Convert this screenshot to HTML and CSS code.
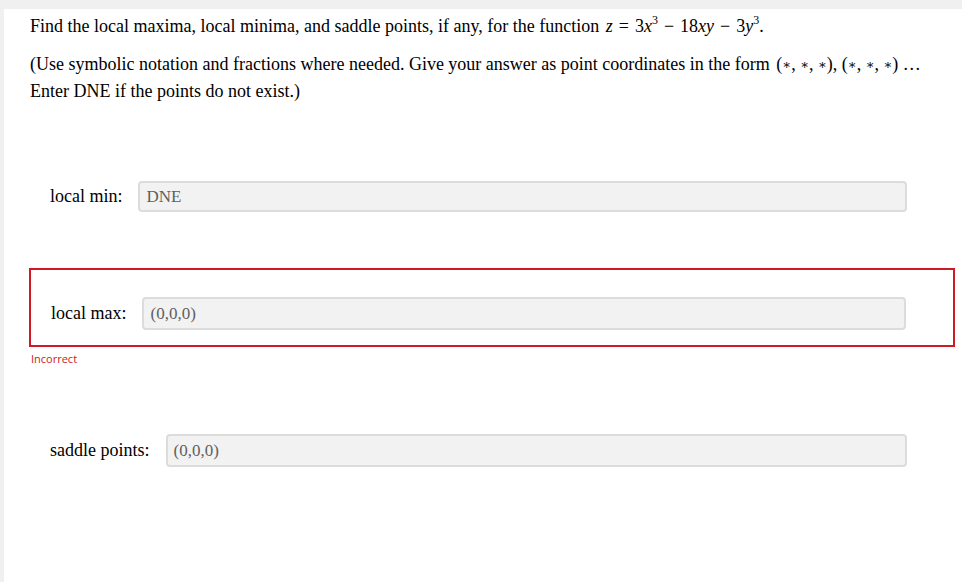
FILE: index.html
```html
<!DOCTYPE html>
<html>
<head>
<meta charset="utf-8">
<link rel="stylesheet" href="styles.css">
</head>
<body>
<div class="panel">
  <p class="question">Find the local maxima, local minima, and saddle points, if any, for the function <span class="math"><i>z</i><span class="rel">=</span>3<i>x</i><sup>3</sup><span class="op">&minus;</span>18<i>xy</i><span class="op">&minus;</span>3<i>y</i><sup>3</sup>.</span></p>
  <p class="note">(Use symbolic notation and fractions where needed. Give your answer as point coordinates in the form <span class="math">(<span class="ast">&lowast;</span>, <span class="ast">&lowast;</span>, <span class="ast">&lowast;</span>), (<span class="ast">&lowast;</span>, <span class="ast">&lowast;</span>, <span class="ast">&lowast;</span>) &hellip;</span><br>Enter DNE if the points do not exist.)</p>

  <div class="field field-min">
    <span class="label">local min:</span>
    <div class="input">DNE</div>
  </div>

  <div class="wrong">
    <div class="field field-max">
      <span class="label">local max:</span>
      <div class="input">(0,0,0)</div>
    </div>
  </div>
  <div class="feedback">Incorrect</div>

  <div class="field field-saddle">
    <span class="label">saddle points:</span>
    <div class="input">(0,0,0)</div>
  </div>
</div>
</body>
</html>
```

FILE: styles.css
```css
html, body {
  margin: 0;
  padding: 0;
  height: 100%;
}
body {
  background: #f0f0f0;
  font-family: "Liberation Serif", "Times New Roman", serif;
  color: #000;
  overflow: hidden;
}
.panel {
  background: #fff;
  margin: 9px 0 0 4px;
  padding: 1px 7px 0 25px;
  height: 600px;
}
.question, .note {
  font-size: 18px;
  line-height: 26px;
  margin: 0;
  padding-left: 1px;
}
.question {
  margin-top: 3px;
}
.note {
  margin-top: 12px;
}
.math {
  margin-left: 2px;
}
.math i {
  font-style: italic;
}
.math sup {
  font-size: 12px;
  line-height: 0;
  vertical-align: 8px;
}
.rel {
  margin: 0 6px;
}
.op {
  margin: 0 6px;
}
.ast {
  font-family: "DejaVu Serif", serif;
  font-size: 13px;
  vertical-align: 1px;
}
.field {
  display: flex;
  align-items: center;
  padding: 0 48px 0 21px;
}
.label {
  font-size: 18px;
  margin-right: 16px;
  white-space: nowrap;
}
.input {
  flex: 1;
  height: 27px;
  line-height: 27px;
  border: 2px solid #dcdcdc;
  border-radius: 4px;
  background: #f2f2f2;
  color: #5f5f5f;
  font-size: 17px;
  padding: 0 6px;
}
.field-min {
  margin-top: 77px;
}
.wrong {
  margin-top: 56px;
  border: 2px solid #cf1a24;
  padding: 27px 0 15px 0;
}
.field-max {
  padding-left: 20px;
  padding-right: 47px;
}
.field-max .input,
.field-saddle .input {
  height: 29px;
  line-height: 29px;
}
.feedback {
  font-family: "Open Sans", "Liberation Sans", sans-serif;
  font-size: 11px;
  color: #cf1a24;
  margin: 4px 0 0 2px;
  line-height: 16px;
}
.field-saddle {
  margin-top: 67px;
}
```
